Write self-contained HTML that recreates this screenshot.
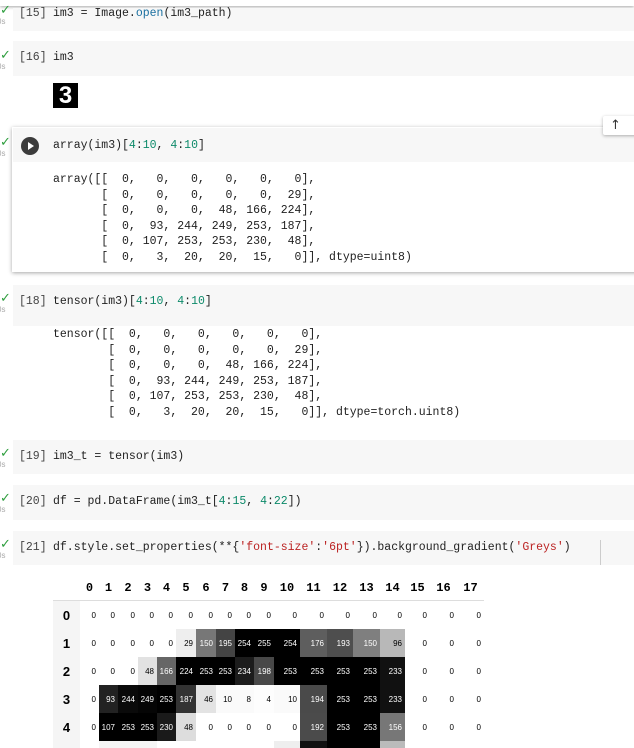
<!DOCTYPE html>
<html><head><meta charset="utf-8"><style>
html,body{margin:0;width:634px;height:748px;overflow:hidden}
body{background:#fff;position:relative;font-family:"Liberation Mono",monospace;font-size:11.5px;color:#212121}
.abs{position:absolute}
.cell{position:absolute;left:13px;right:0;background:#f7f7f7}
.num{position:absolute;left:19px;color:#444}
.code{position:absolute;left:53px;white-space:pre}
.chk{position:absolute;left:0;color:#2e9e3e;font-family:"DejaVu Sans",sans-serif;font-size:13px}
.sec{position:absolute;left:-3px;color:#aaa;font-family:"Liberation Sans",sans-serif;font-size:8px}
.out{position:absolute;left:53px;white-space:pre;line-height:15.6px}
.g{color:#0d8a6a}.r{color:#b22}.b{color:#1a6fa0}
table{position:absolute;left:53px;top:575px;border-collapse:collapse;table-layout:fixed;font-family:"Liberation Sans",sans-serif}
td,th{padding:0 3px 0 0;text-align:right;font-size:8px;height:28px;color:#000}
th{font-family:"Liberation Mono",monospace;font-size:12px;font-weight:bold;text-align:center;height:25px;padding:0;border-bottom:1px solid #ddd}
td.i{background:#f5f5f5;font-weight:bold;font-size:13px;text-align:center;padding:0}
.w{color:#fff}
</style></head><body>
<div class="abs" style="left:0;top:0;width:634px;height:6px;background:#fff;box-shadow:0 1px 3px rgba(0,0,0,.35)"></div>

<div class="cell" style="top:8px;height:23px"></div>
<div class="chk" style="top:3px">✓</div><div class="sec" style="top:17px">0s</div>
<div class="num" style="top:7px">[15]</div>
<div class="code" style="top:7px">im3 = Image.<span class="b">open</span>(im3_path)</div>

<div class="cell" style="top:41px;height:35px"></div>
<div class="chk" style="top:48px">✓</div><div class="sec" style="top:62px">0s</div>
<div class="num" style="top:51px">[16]</div>
<div class="code" style="top:51px">im3</div>
<div class="abs" style="left:53px;top:83px;width:25px;height:25px;background:#000;color:#fff;font-family:'Liberation Sans',sans-serif;font-weight:bold;font-size:24px;line-height:25px;text-align:center">3</div>

<div class="abs" style="left:12px;top:127px;width:640px;height:145px;background:#fff;box-shadow:0 1px 4px rgba(0,0,0,.35)"></div>
<div class="abs" style="left:13px;top:128px;right:0;height:34px;background:#f7f7f7"></div>
<div class="chk" style="top:135px">✓</div><div class="sec" style="top:149px">0s</div>
<div class="abs" style="left:21px;top:137px;width:18px;height:18px;border-radius:50%;background:#3c3c3c"></div>
<div class="abs" style="left:28px;top:142px;width:0;height:0;border-left:6px solid #fff;border-top:4px solid transparent;border-bottom:4px solid transparent"></div>
<div class="code" style="top:139px">array(im3)[<span class="g">4</span>:<span class="g">10</span>, <span class="g">4</span>:<span class="g">10</span>]</div>
<div class="out" style="top:172px">array([[  0,   0,   0,   0,   0,   0],
       [  0,   0,   0,   0,   0,  29],
       [  0,   0,   0,  48, 166, 224],
       [  0,  93, 244, 249, 253, 187],
       [  0, 107, 253, 253, 230,  48],
       [  0,   3,  20,  20,  15,   0]], dtype=uint8)</div>
<div class="abs" style="left:603px;top:116px;width:40px;height:19px;background:#fff;border-radius:2px;box-shadow:0 1px 3px rgba(0,0,0,.3);font-family:'DejaVu Sans',sans-serif;font-size:13px;line-height:19px;color:#333;padding-left:7px">↑</div>

<div class="cell" style="top:285px;height:41px"></div>
<div class="chk" style="top:291px">✓</div><div class="sec" style="top:305px">0s</div>
<div class="num" style="top:295px">[18]</div>
<div class="code" style="top:295px">tensor(im3)[<span class="g">4</span>:<span class="g">10</span>, <span class="g">4</span>:<span class="g">10</span>]</div>
<div class="out" style="top:327px">tensor([[  0,   0,   0,   0,   0,   0],
        [  0,   0,   0,   0,   0,  29],
        [  0,   0,   0,  48, 166, 224],
        [  0,  93, 244, 249, 253, 187],
        [  0, 107, 253, 253, 230,  48],
        [  0,   3,  20,  20,  15,   0]], dtype=torch.uint8)</div>

<div class="cell" style="top:440px;height:34px"></div>
<div class="chk" style="top:446px">✓</div><div class="sec" style="top:460px">0s</div>
<div class="num" style="top:450px">[19]</div>
<div class="code" style="top:450px">im3_t = tensor(im3)</div>

<div class="cell" style="top:485px;height:35px"></div>
<div class="chk" style="top:491px">✓</div><div class="sec" style="top:505px">0s</div>
<div class="num" style="top:495px">[20]</div>
<div class="code" style="top:495px">df = pd.DataFrame(im3_t[<span class="g">4</span>:<span class="g">15</span>, <span class="g">4</span>:<span class="g">22</span>])</div>

<div class="cell" style="top:531px;height:34px"></div>
<div class="chk" style="top:537px">✓</div><div class="sec" style="top:551px">0s</div>
<div class="num" style="top:541px">[21]</div>
<div class="code" style="top:541px">df.style.set_properties(**{<span class="r">'font-size'</span>:<span class="r">'6pt'</span>}).background_gradient(<span class="r">'Greys'</span>)</div>
<div class="abs" style="left:600px;top:540px;width:1px;height:25px;background:#ccc"></div>

<table>
<colgroup><col style="width:27px"><col style="width:19px"><col style="width:19px"><col style="width:20px"><col style="width:19px"><col style="width:19px"><col style="width:20px"><col style="width:20px"><col style="width:19px"><col style="width:19px"><col style="width:20px"><col style="width:26px"><col style="width:27px"><col style="width:26px"><col style="width:27px"><col style="width:25px"><col style="width:25px"><col style="width:27px"><col style="width:27px"></colgroup>
<tr><th></th><th>0</th><th>1</th><th>2</th><th>3</th><th>4</th><th>5</th><th>6</th><th>7</th><th>8</th><th>9</th><th>10</th><th>11</th><th>12</th><th>13</th><th>14</th><th>15</th><th>16</th><th>17</th></tr>
<tr><td class="i">0</td><td>0</td><td>0</td><td>0</td><td>0</td><td>0</td><td>0</td><td>0</td><td>0</td><td>0</td><td>0</td><td>0</td><td>0</td><td>0</td><td>0</td><td>0</td><td>0</td><td>0</td><td>0</td></tr>
<tr><td class="i">1</td><td>0</td><td>0</td><td>0</td><td>0</td><td>0</td><td style="background:#eee">29</td><td class="w" style="background:#777">150</td><td class="w" style="background:#444">195</td><td class="w" style="background:#000">254</td><td class="w" style="background:#000">255</td><td class="w" style="background:#000">254</td><td class="w" style="background:#5e5e5e">176</td><td class="w" style="background:#4e4e4e">193</td><td class="w" style="background:#7f7f7f">150</td><td style="background:#b8b8b8">96</td><td>0</td><td>0</td><td>0</td></tr>
<tr><td class="i">2</td><td>0</td><td>0</td><td>0</td><td style="background:#e2e2e2">48</td><td class="w" style="background:#666">166</td><td class="w" style="background:#000">224</td><td class="w" style="background:#000">253</td><td class="w" style="background:#000">253</td><td class="w" style="background:#1c1c1c">234</td><td class="w" style="background:#484848">198</td><td class="w" style="background:#000">253</td><td class="w" style="background:#000">253</td><td class="w" style="background:#000">253</td><td class="w" style="background:#000">253</td><td class="w" style="background:#111">233</td><td>0</td><td>0</td><td>0</td></tr>
<tr><td class="i">3</td><td>0</td><td class="w" style="background:#222">93</td><td class="w" style="background:#0a0a0a">244</td><td class="w" style="background:#050505">249</td><td class="w" style="background:#000">253</td><td class="w" style="background:#333">187</td><td style="background:#e3e3e3">46</td><td style="background:#fafafa">10</td><td style="background:#fafafa">8</td><td style="background:#fdfdfd">4</td><td style="background:#fafafa">10</td><td class="w" style="background:#4a4a4a">194</td><td class="w" style="background:#000">253</td><td class="w" style="background:#000">253</td><td class="w" style="background:#111">233</td><td>0</td><td>0</td><td>0</td></tr>
<tr><td class="i">4</td><td>0</td><td class="w" style="background:#000">107</td><td class="w" style="background:#000">253</td><td class="w" style="background:#000">253</td><td class="w" style="background:#1a1a1a">230</td><td style="background:#ddd">48</td><td>0</td><td>0</td><td>0</td><td>0</td><td>0</td><td class="w" style="background:#4b4b4b">192</td><td class="w" style="background:#000">253</td><td class="w" style="background:#000">253</td><td class="w" style="background:#777">156</td><td>0</td><td>0</td><td>0</td></tr>
<tr><td class="i"></td><td></td><td style="background:#f5f5f5"></td><td style="background:#f5f5f5"></td><td style="background:#f5f5f5"></td><td></td><td></td><td></td><td></td><td></td><td></td><td style="background:#eee"></td><td style="background:#111"></td><td style="background:#000"></td><td style="background:#000"></td><td style="background:#bbb"></td><td></td><td></td><td></td></tr>
</table>
</body></html>
